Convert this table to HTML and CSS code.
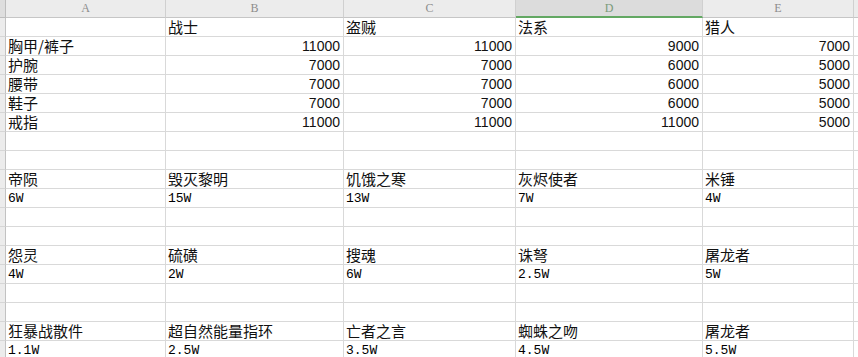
FILE: index.html
```html
<!DOCTYPE html>
<html lang="zh">
<head>
<meta charset="utf-8">
<title>Sheet</title>
<link rel="stylesheet" href="styles.css">
</head>
<body>
<div class="sheet">
  <div class="corner"></div>
  <div class="hd">A</div>
  <div class="hd">B</div>
  <div class="hd">C</div>
  <div class="hd sel">D</div>
  <div class="hd">E</div>
  <div class="hd tail"></div>

  <div class="rh"></div><div class="c"></div><div class="c">战士</div><div class="c">盗贼</div><div class="c">法系</div><div class="c">猎人</div><div class="c tail"></div>
  <div class="rh"></div><div class="c">胸甲/裤子</div><div class="c n">11000</div><div class="c n">11000</div><div class="c n">9000</div><div class="c n">7000</div><div class="c tail"></div>
  <div class="rh"></div><div class="c">护腕</div><div class="c n">7000</div><div class="c n">7000</div><div class="c n">6000</div><div class="c n">5000</div><div class="c tail"></div>
  <div class="rh"></div><div class="c">腰带</div><div class="c n">7000</div><div class="c n">7000</div><div class="c n">6000</div><div class="c n">5000</div><div class="c tail"></div>
  <div class="rh"></div><div class="c">鞋子</div><div class="c n">7000</div><div class="c n">7000</div><div class="c n">6000</div><div class="c n">5000</div><div class="c tail"></div>
  <div class="rh"></div><div class="c">戒指</div><div class="c n">11000</div><div class="c n">11000</div><div class="c n">11000</div><div class="c n">5000</div><div class="c tail"></div>
  <div class="rh"></div><div class="c"></div><div class="c"></div><div class="c"></div><div class="c"></div><div class="c"></div><div class="c tail"></div>
  <div class="rh"></div><div class="c"></div><div class="c"></div><div class="c"></div><div class="c"></div><div class="c"></div><div class="c tail"></div>
  <div class="rh"></div><div class="c">帝陨</div><div class="c">毁灭黎明</div><div class="c">饥饿之寒</div><div class="c">灰烬使者</div><div class="c">米锤</div><div class="c tail"></div>
  <div class="rh"></div><div class="c w">6W</div><div class="c w">15W</div><div class="c w">13W</div><div class="c w">7W</div><div class="c w">4W</div><div class="c tail"></div>
  <div class="rh"></div><div class="c"></div><div class="c"></div><div class="c"></div><div class="c"></div><div class="c"></div><div class="c tail"></div>
  <div class="rh"></div><div class="c"></div><div class="c"></div><div class="c"></div><div class="c"></div><div class="c"></div><div class="c tail"></div>
  <div class="rh"></div><div class="c">怨灵</div><div class="c">硫磺</div><div class="c">搜魂</div><div class="c">诛弩</div><div class="c">屠龙者</div><div class="c tail"></div>
  <div class="rh"></div><div class="c w">4W</div><div class="c w">2W</div><div class="c w">6W</div><div class="c w">2.5W</div><div class="c w">5W</div><div class="c tail"></div>
  <div class="rh"></div><div class="c"></div><div class="c"></div><div class="c"></div><div class="c"></div><div class="c"></div><div class="c tail"></div>
  <div class="rh"></div><div class="c"></div><div class="c"></div><div class="c"></div><div class="c"></div><div class="c"></div><div class="c tail"></div>
  <div class="rh"></div><div class="c">狂暴战散件</div><div class="c">超自然能量指环</div><div class="c">亡者之言</div><div class="c">蜘蛛之吻</div><div class="c">屠龙者</div><div class="c tail"></div>
  <div class="rh"></div><div class="c w">1.1W</div><div class="c w">2.5W</div><div class="c w">3.5W</div><div class="c w">4.5W</div><div class="c w">5.5W</div><div class="c tail"></div>
</div>
</body>
</html>
```

FILE: styles.css
```css
html, body {
  margin: 0;
  padding: 0;
  background: #ffffff;
  overflow: hidden;
}

.sheet {
  display: grid;
  grid-template-columns: 6px 160px 178px 172px 187px 151px 1fr;
  grid-template-rows: 18px;
  grid-auto-rows: 19px;
  width: 858px;
  font-family: "Noto Sans CJK SC", "Liberation Sans", sans-serif;
  font-size: 15px;
  color: #111111;
}

.sheet > div {
  box-sizing: border-box;
  white-space: nowrap;
}

.corner {
  background: #dedede;
  border-right: 1px solid #bdbdbd;
  border-bottom: 1px solid #bdbdbd;
}

.hd {
  background: #ececec;
  border-right: 1px solid #d0d0d0;
  border-bottom: 1px solid #c6c6c6;
  font-family: "Liberation Serif", serif;
  font-size: 12px;
  line-height: 17px;
  color: #8c8c8c;
  text-align: center;
}

.hd.sel {
  background: #dcdcdc;
  border-bottom: 2px solid #63a863;
  color: #7a9a7a;
  line-height: 16px;
}

.hd.tail {
  border-right: none;
}

.rh {
  background: #ececec;
  border-right: 1px solid #c2c2c2;
  border-bottom: 1px solid #d6d6d6;
}

.c {
  border-right: 1px solid #d9d9d9;
  border-bottom: 1px solid #d9d9d9;
  padding: 0 3px 0 2px;
  line-height: 18px;
  display: flex;
  align-items: flex-end;
}

.c.tail {
  border-right: none;
}

.n {
  justify-content: flex-end;
  font-family: "Liberation Sans", sans-serif;
  font-size: 14px;
  line-height: 17px;
}

.w {
  font-family: "Liberation Mono", monospace;
  font-size: 13px;
  line-height: 17px;
  color: #000000;
}
```
